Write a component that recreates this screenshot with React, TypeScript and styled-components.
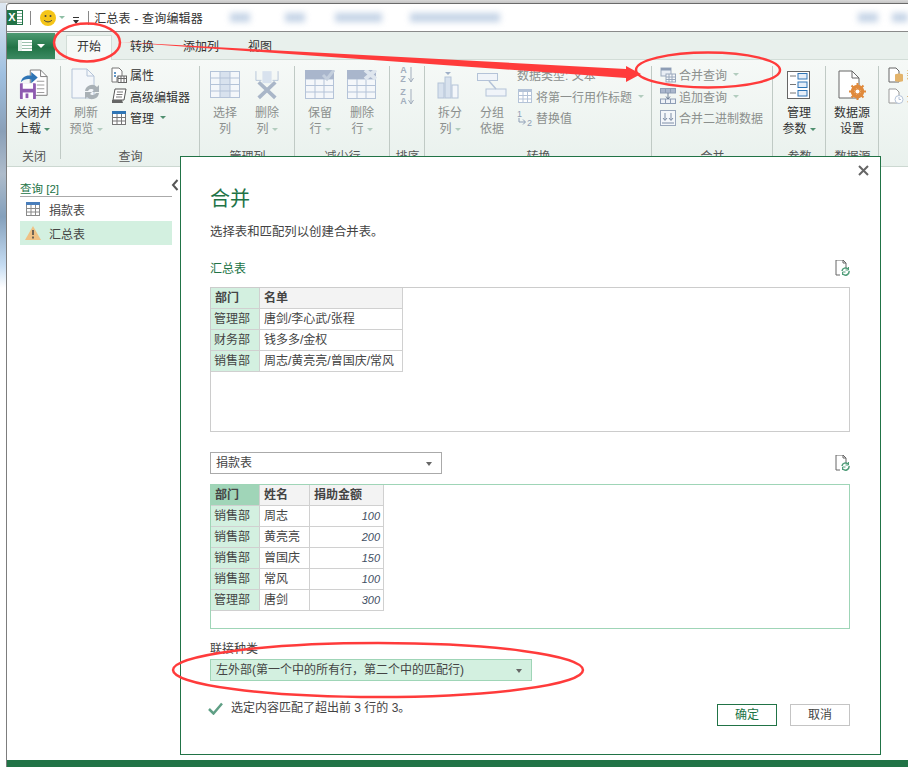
import React from 'react';
import styled, { createGlobalStyle } from 'styled-components';

const GlobalStyle = createGlobalStyle`
  html, body { margin: 0; padding: 0; background: #fff; }
  body { font-family: "Liberation Sans", "Noto Sans CJK SC", sans-serif; font-size: 12px; color: #444; }
  * { box-sizing: border-box; }
`;

const OFF = '#b4c3d8';
const OFF_FILL = '#d8e2ee';

/* ---------- ribbon icons ---------- */
const CloseLoadIcon = () => (
  <svg width="30" height="32" viewBox="0 0 32 34">
    <path d="M12 1h11l7 7v20H12z" fill="#fff" stroke="#777" />
    <path d="M23 1v7h7" fill="none" stroke="#777" />
    <path d="M19 13h8M19 17h8M19 21h8M19 25h8" stroke="#999" />
    <path d="M2 14c1-6 6-8 11-7V3l7 6-7 6v-4c-4-1-8 0-11 3z" fill="#2f75b5" />
    <rect x="1" y="15" width="17" height="17" rx="1" fill="#8e5bb0" />
    <rect x="4" y="15" width="11" height="6" fill="#fff" />
    <rect x="4" y="25" width="11" height="7" fill="#fff" />
    <rect x="7" y="26" width="3" height="5" fill="#8e5bb0" />
  </svg>
);
const RefreshIcon = () => (
  <svg width="32" height="34" viewBox="0 0 32 34">
    <path d="M2 1h15l7 7v22H2z" fill="#f4f7fa" stroke={OFF} />
    <path d="M17 1v7h7" fill="none" stroke={OFF} />
    <path d="M15 23a7 7 0 0 1 12-4l2-2v7h-7l2-2a4 4 0 0 0-6 1z" fill="#a9b1b6" />
    <path d="M29 25a7 7 0 0 1-12 4l-2 2v-7h7l-2 2a4 4 0 0 0 6-1z" fill="#a9b1b6" />
  </svg>
);
const PropsIcon = () => (
  <svg width="16" height="16" viewBox="0 0 16 16">
    <path d="M1 1h7l3 3v6H6v5H1z" fill="#fff" stroke="#777" />
    <path d="M3 6h2M3 9h2" stroke="#2f75b5" strokeWidth="1.5" />
    <rect x="7" y="9" width="8.5" height="6.5" fill="#fff" stroke="#666" />
    <path d="M7 11.5h8M10 9v6M13 9v6" stroke="#666" />
  </svg>
);
const ScrollIcon = () => (
  <svg width="16" height="16" viewBox="0 0 16 16">
    <path d="M4 1h11l-2 11H2z" fill="#fff" stroke="#555" />
    <path d="M1 12h10l1 3H1z" fill="#666" />
    <path d="M6 4h6M5.500 6.500h6M5 9h6" stroke="#777" />
  </svg>
);
const SmallGrid = ({ head = '#2f75b5', line = '#777' }: { head?: string; line?: string }) => (
  <svg width="14" height="14" viewBox="0 0 14 14">
    <rect x=".5" y=".5" width="13" height="13" fill="#fff" stroke={line} />
    <rect x="0" y="0" width="14" height="3" fill={head} />
    <path d="M0 6.500h14M0 10h14M5 3v11M9.500 3v11" stroke={line} />
  </svg>
);
const ChooseIcon = () => (
  <svg width="30" height="27" viewBox="0 0 30 27">
    <rect x=".5" y=".5" width="29" height="26" fill="#f4f7fa" stroke={OFF} />
    <rect x="10" y="1" width="10" height="25" fill={OFF_FILL} />
    <path d="M0 7h30M0 13.500h30M0 20h30M10 0v27M20 0v27" stroke={OFF} />
  </svg>
);
const RemoveColIcon = () => (
  <svg width="24" height="30" viewBox="0 0 26 30">
    <path d="M1 0v10h6M25 0v10h-6" fill="none" stroke={OFF} />
    <rect x="8" y="0" width="10" height="13" fill={OFF_FILL} />
    <path d="M4 12l18 17M22 12L4 29" stroke="#a9b6c8" strokeWidth="4" />
  </svg>
);
const KeepRowIcon = ({ cross }: { cross?: boolean }) => (
  <svg width="30" height="29" viewBox="0 0 30 29">
    <rect x=".5" y="9" width="28" height="19.500" fill="#f4f7fa" stroke={OFF} />
    <path d="M0 15.500h29M0 22h29M10 9v20M19 9v20" stroke={OFF} />
    <rect x="0" y="0" width="29" height="9" fill="#a9b6cc" />
    {cross
      ? <path d="M18 0l11 9M29 0L18 9" stroke="#dfe6ee" strokeWidth="4" />
      : <path d="M18 5l4 4 7-9" fill="none" stroke="#c4cfdd" strokeWidth="3" />}
  </svg>
);
const SortIcon = ({ top, bottom }: { top: string; bottom: string }) => (
  <SortBox>
    <SortLetters><span>{top}</span><span>{bottom}</span></SortLetters>
    <svg width="6" height="16" viewBox="0 0 6 16"><path d="M3 0v15M.5 11L3 15l2.500-4" fill="none" stroke="#a3aebd" /></svg>
  </SortBox>
);
const SplitIcon = () => (
  <svg width="26" height="28" viewBox="0 0 26 28">
    <rect x="1" y="12" width="6" height="15" fill={OFF_FILL} stroke={OFF} />
    <rect x="8" y="6" width="6" height="21" fill={OFF_FILL} stroke={OFF} />
    <rect x="15" y="14" width="6" height="13" fill="#f4f7fa" stroke={OFF} />
    <path d="M8 1h6l-3 3z" fill="#9fb0c8" />
  </svg>
);
const GroupIcon = () => (
  <svg width="30" height="24" viewBox="0 0 30 24">
    <rect x=".5" y=".5" width="20" height="7" fill="#f0f4f9" stroke={OFF} />
    <rect x="9" y="16" width="20" height="7" fill="#f0f4f9" stroke={OFF} />
    <path d="M12 8l7 8" stroke={OFF} strokeWidth="1.500" />
  </svg>
);
const MergeIcon = () => (
  <svg width="16" height="16" viewBox="0 0 16 16">
    <rect x="1" y="1" width="10" height="8" fill="#e9eef5" stroke="#9aa8bc" />
    <rect x="1" y="1" width="10" height="2.500" fill="#8d9db5" />
    <rect x="6" y="7" width="9.500" height="8" fill="#f4f7fa" stroke="#9aa8bc" />
    <path d="M6 10h9M6 12.500h9M9 7v8M12 7v8" stroke="#9aa8bc" />
  </svg>
);
const AppendIcon = () => (
  <svg width="16" height="16" viewBox="0 0 16 16">
    <rect x=".5" y=".5" width="15" height="4.500" fill="#a9b6cc" stroke="#8d9db5" />
    <rect x=".5" y="11" width="15" height="4.500" fill="#eef2f7" stroke="#8d9db5" />
    <path d="M5.500 0v5M10.500 0v5M5.500 11v5M10.500 11v5" stroke="#8d9db5" />
    <path d="M8 5v6M6 8.500L8 11l2-2.500" fill="none" stroke="#6f8098" />
  </svg>
);
const BinaryIcon = () => (
  <svg width="16" height="16" viewBox="0 0 16 16">
    <rect x=".5" y=".5" width="15" height="15" fill="#f4f7fa" stroke="#9aa8bc" />
    <path d="M5 3v7M3 8l2 2.500L7 8M11 3v7M9 8l2 2.500L13 8M2 13h12" fill="none" stroke="#7c8da6" />
  </svg>
);
const ReplaceIcon = () => (
  <svg width="16" height="18" viewBox="0 0 16 18">
    <text x="0" y="8" fontSize="9" fontFamily="Liberation Sans, sans-serif" fill="#8d9db5">1</text>
    <text x="10" y="17" fontSize="9" fontFamily="Liberation Sans, sans-serif" fill="#8d9db5">2</text>
    <path d="M2 9v4h6M6 10.500L8.500 13 6 15.500" fill="none" stroke="#8d9db5" />
  </svg>
);
const ParamsIcon = () => (
  <svg width="24" height="28" viewBox="0 0 24 28">
    <rect x=".5" y=".5" width="22" height="27" fill="#fff" stroke="#666" />
    <path d="M3 5h6M3 13.500h6M3 22h6" stroke="#777" />
    <g fill="#e6eef8" stroke="#2f75b5"><rect x="11" y="2.500" width="9" height="5.500" /><rect x="11" y="11" width="9" height="5.500" /><rect x="11" y="19.500" width="9" height="5.500" /></g>
  </svg>
);
const SourceIcon = () => (
  <svg width="28" height="30" viewBox="0 0 28 30">
    <path d="M1 1h13l7 7v20H1z" fill="#fff" stroke="#666" />
    <path d="M14 1v7h7" fill="none" stroke="#666" />
    <circle cx="19.500" cy="21.500" r="5" fill="none" stroke="#e08a3c" strokeWidth="3.500" />
    <path d="M19.500 13v17M11 21.500h17M13.500 15.500l12 12M25.500 15.500l-12 12" stroke="#e08a3c" strokeWidth="2" />
    <circle cx="19.500" cy="21.500" r="2" fill="#fff" />
  </svg>
);
const DocDbIcon = () => (
  <svg width="16" height="16" viewBox="0 0 16 16">
    <path d="M1 1h7l3 3v11H1z" fill="#fff" stroke="#666" />
    <ellipse cx="11" cy="8" rx="4" ry="1.500" fill="#e3b36a" />
    <path d="M7 8v6c0 1 8 1 8 0V8z" fill="#e3b36a" />
  </svg>
);
const DocClockIcon = () => (
  <svg width="16" height="16" viewBox="0 0 16 16">
    <path d="M1 1h7l3 3v11H1z" fill="#fff" stroke="#999" />
    <circle cx="11" cy="11.500" r="4" fill="#fff" stroke={OFF} />
    <path d="M11 9v2.500h2" fill="none" stroke={OFF} />
  </svg>
);
const DocRefresh = () => (
  <svg width="15" height="16" viewBox="0 1 15 16">
    <path d="M5 16H1V1h7l3 3v5" fill="none" stroke="#666" />
    <path d="M8 1v3h3" fill="none" stroke="#666" />
    <path d="M7 12a3.500 3.500 0 0 1 6-2M14 12a3.500 3.500 0 0 1-6 3" fill="none" stroke="#4f9c78" strokeWidth="1.500" />
    <path d="M13.500 8v3h-3M7.500 16v-3h3" fill="none" stroke="#4f9c78" />
  </svg>
);

/* ---------- page frame ---------- */
const Page = styled.div`
  position: relative;
  width: 908px;
  height: 767px;
  overflow: hidden;
  display: flex;
  flex-direction: column;
  background: #fff;
`;
const TopEdge = styled.div`
  height: 3px;
  flex: none;
  background: linear-gradient(#d8d8d8, #c4c4c4);
`;
const Main = styled.div`
  flex: 1;
  min-height: 0;
  display: flex;
`;
const DesktopStrip = styled.div`
  width: 6px;
  flex: none;
  height: 285px;
  background: linear-gradient(#dfe8f2 0%, #9fc0e0 25%, #8aa0b8 45%, #aebccb 60%, #84a0bc 75%, #c5dcf2 92%, #fff 100%);
`;
const AppWindow = styled.div`
  flex: 1;
  min-width: 0;
  display: flex;
  flex-direction: column;
  border-left: 1px solid #7d7d7d;
  border-top: 1px solid #6a6a6a;
  border-top-left-radius: 4px;
`;

/* ---------- title bar ---------- */
const TitleBar = styled.div`
  height: 28px;
  flex: none;
  display: flex;
  align-items: center;
  border-bottom: 1px solid #8a8a8a;
  color: #333;
  font-size: 12px;
`;
const ExcelMark = styled.div`
  position: relative;
  width: 16px;
  height: 15px;
  flex: none;
  background: repeating-linear-gradient(#fff 0 2px, #7fae96 2px 3px);
  border: 1px solid #217346;
`;
const ExcelX = styled.span`
  position: absolute;
  left: -1px;
  top: -1px;
  width: 10px;
  height: 15px;
  background: #217346;
  color: #fff;
  font: bold 11px/15px "Liberation Sans", sans-serif;
  text-align: center;
`;
const Divider = styled.div<{ $left: number }>`
  width: 1px;
  height: 14px;
  flex: none;
  margin-left: ${p => p.$left}px;
  background: #888;
`;
const Smiley = styled.div`
  position: relative;
  width: 16px;
  height: 16px;
  flex: none;
  margin-left: 9px;
  border-radius: 50%;
  background: #f5c518;
`;
const SmileyCaret = styled.div`
  width: 0;
  height: 0;
  margin: 0 0 0 3px;
  border: 3px solid transparent;
  border-top: 3px solid #8fbfa5;
  transform: translateY(1px);
`;
const QuickCaret = styled.div`
  width: 7px;
  margin-left: 8px;
  margin-top: 6px;
  border-top: 1px solid #333;
  padding-top: 2px;
  &::after {
    content: '';
    display: block;
    width: 0;
    height: 0;
    border: 3.500px solid transparent;
    border-top: 4px solid #333;
    border-bottom: 0;
  }
`;
const WindowTitle = styled.div`
  margin-left: 5px;
  white-space: nowrap;
  letter-spacing: .2px;
`;
const BlurMenu = styled.div<{ $left: number; $w: number }>`
  width: ${p => p.$w}px;
  height: 9px;
  flex: none;
  margin-left: ${p => p.$left}px;
  background: #c4d3e6;
  filter: blur(3px);
`;

/* ---------- tabs ---------- */
const TabStrip = styled.div`
  height: 28px;
  flex: none;
  display: flex;
  align-items: flex-end;
  background: #e8f0ec;
  border-bottom: 1px solid #d2ddd7;
`;
const FileButton = styled.div`
  width: 48px;
  height: 26px;
  align-self: center;
  flex: none;
  display: flex;
  align-items: center;
  justify-content: center;
  gap: 5px;
  background: linear-gradient(#4d9a72, #217346 55%, #3c8a62);
`;
const FileGlyph = styled.div`
  width: 14px;
  height: 11px;
  background: repeating-linear-gradient(#fff 0 2px, #9cc2ae 2px 3px);
  border-left: 4px solid #e4efe9;
`;
const FileCaret = styled.div`
  width: 0;
  height: 0;
  border: 4px solid transparent;
  border-top: 4px solid #fff;
  border-bottom: 0;
`;
const Tab = styled.div<{ $w: number; $left?: number; $active?: boolean }>`
  width: ${p => p.$w}px;
  height: 25px;
  flex: none;
  margin-left: ${p => p.$left ?? 0}px;
  margin-bottom: -1px;
  text-align: center;
  line-height: 22px;
  color: #333;
  background: ${p => (p.$active ? '#f7faf8' : 'transparent')};
  border: 1px solid ${p => (p.$active ? '#d2ddd7' : 'transparent')};
  border-bottom: 0;
`;

/* ---------- ribbon ---------- */
const Ribbon = styled.div`
  height: 107px;
  flex: none;
  display: flex;
  background: linear-gradient(#f6f9f7, #e9f1ed);
  border-bottom: 1px solid #ccd8d1;
`;
const Group = styled.div<{ $w: number; $last?: boolean }>`
  position: relative;
  width: ${p => p.$w}px;
  flex: none;
  display: flex;
  flex-direction: column;
  &::after {
    content: '';
    display: ${p => (p.$last ? 'none' : 'block')};
    position: absolute;
    right: 0;
    top: 6px;
    bottom: 7px;
    width: 1px;
    background: #c0cac5;
  }
`;
const GroupBody = styled.div<{ $pad?: number }>`
  flex: 1;
  display: flex;
  padding: 5px 0 0 ${p => p.$pad ?? 0}px;
`;
const GroupLabel = styled.div`
  height: 16px;
  margin-bottom: 1px;
  line-height: 16px;
  text-align: center;
  color: #555;
`;
const LargeButton = styled.div<{ $w: number; $off?: boolean }>`
  width: ${p => p.$w}px;
  flex: none;
  display: flex;
  flex-direction: column;
  align-items: center;
  color: ${p => (p.$off ? '#8b8f8d' : '#333')};
`;
const IconSlot = styled.div`
  height: 40px;
  padding-bottom: 1px;
  display: flex;
  align-items: center;
  justify-content: center;
`;
const ButtonLine = styled.div`
  height: 16px;
  line-height: 16px;
  white-space: nowrap;
  display: flex;
  align-items: center;
`;
const Caret = styled.i<{ $off?: boolean }>`
  display: inline-block;
  width: 0;
  height: 0;
  margin-left: 3px;
  border: 3px solid transparent;
  border-top: 3px solid ${p => (p.$off ? '#b2ccbe' : '#4f8f6f')};
  border-bottom: 0;
`;
const SmallColumn = styled.div<{ $left?: number }>`
  display: flex;
  flex-direction: column;
  margin-top: -1px;
  margin-left: ${p => p.$left ?? 0}px;
`;
const SmallRow = styled.div<{ $off?: boolean }>`
  height: 21.500px;
  display: flex;
  align-items: center;
  gap: 3px;
  white-space: nowrap;
  color: ${p => (p.$off ? '#8b8f8d' : '#333')};
`;
const SmallIcon = styled.div`
  width: 16px;
  height: 16px;
  flex: none;
  display: flex;
  align-items: center;
  justify-content: center;
`;
const SortColumn = styled.div`
  display: flex;
  flex-direction: column;
  align-items: center;
  gap: 4px;
  width: 34px;
  padding-top: 1px;
`;
const SortBox = styled.div`
  display: flex;
  align-items: center;
  gap: 1px;
  height: 18px;
`;
const SortLetters = styled.div`
  display: flex;
  flex-direction: column;
  font: bold 9px/9px "Liberation Sans", sans-serif;
  color: #a3aebd;
`;

/* ---------- query pane ---------- */
const Content = styled.div`
  flex: 1;
  min-height: 0;
`;
const QueryPane = styled.div`
  width: 166px;
  margin-left: 13px;
  padding-top: 14px;
`;
const PaneHeader = styled.div`
  position: relative;
  width: 152px;
  height: 16px;
  line-height: 17px;
  color: #217346;
  font-size: 11.500px;
  border-bottom: 1px solid #aaa;
`;
const PaneCollapse = styled.svg`
  position: absolute;
  right: -7px;
  top: -2px;
`;
const QueryRow = styled.div<{ $selected?: boolean }>`
  width: 152px;
  height: 24px;
  display: flex;
  align-items: center;
  gap: ${p => (p.$selected ? 8 : 9)}px;
  padding-left: ${p => (p.$selected ? 5 : 6)}px;
  color: #444;
  background: ${p => (p.$selected ? '#d3f0e0' : 'transparent')};
`;

/* ---------- dialog ---------- */
const Dialog = styled.div`
  position: absolute;
  left: 180px;
  top: 156px;
  width: 701px;
  height: 599px;
  padding: 28px 30px 0 29px;
  display: flex;
  flex-direction: column;
  background: #fff;
  border: 1px solid #217346;
`;
const CloseButton = styled.svg`
  position: absolute;
  right: 11px;
  top: 8px;
`;
const DialogTitle = styled.div`
  height: 28px;
  line-height: 28px;
  font-size: 20px;
  color: #217346;
`;
const DialogIntro = styled.div`
  height: 16px;
  margin-top: 11px;
  line-height: 16px;
  font-size: 12.400px;
  color: #444;
`;
const SectionRow = styled.div<{ $top: number; $h: number }>`
  height: ${p => p.$h}px;
  display: flex;
  align-items: center;
  justify-content: space-between;
  margin-top: ${p => p.$top}px;
`;
const SectionName = styled.div`
  line-height: 18px;
  height: 16px;
  color: #217346;
`;
const PreviewBox = styled.div<{ $top: number; $active?: boolean }>`
  height: 145px;
  margin-top: ${p => p.$top}px;
  border: 1px solid ${p => (p.$active ? '#9fd5b7' : '#ccc')};
`;
const Table = styled.table`
  border-collapse: separate;
  border-spacing: 0;
  table-layout: fixed;
  font-size: 12px;
  line-height: 16px;
  color: #444;
`;
const HeadCell = styled.th<{ $w: number; $key?: boolean; $selected?: boolean }>`
  width: ${p => p.$w}px;
  height: 21px;
  padding: 0 4px;
  text-align: left;
  font-weight: 700;
  color: #444;
  background: ${p => (p.$selected ? '#a0d5b8' : p.$key ? '#d3f0e0' : '#f3f3f3')};
  border-right: 1px solid #d0d0d0;
  border-bottom: 1px solid #d0d0d0;
`;
const Cell = styled.td<{ $key?: boolean; $num?: boolean }>`
  height: 21px;
  padding: 0 ${p => (p.$num || p.$key ? 3 : 4)}px;
  white-space: nowrap;
  text-align: ${p => (p.$num ? 'right' : 'left')};
  font-style: ${p => (p.$num ? 'italic' : 'normal')};
  font-size: ${p => (p.$num ? 11 : 12)}px;
  color: ${p => (p.$num ? '#3f4f63' : '#444')};
  background: ${p => (p.$key ? '#d3f0e0' : '#fff')};
  border-right: 1px solid #d0d0d0;
  border-bottom: 1px solid #d0d0d0;
`;
const Select = styled.div<{ $w: number; $top?: number; $green?: boolean }>`
  width: ${p => p.$w}px;
  height: 22px;
  margin-top: ${p => p.$top ?? 0}px;
  padding: 1px 9px 0 5px;
  display: flex;
  align-items: center;
  justify-content: space-between;
  line-height: 17px;
  color: #444;
  background: ${p => (p.$green ? '#d3f0e0' : '#fff')};
  border: 1px solid ${p => (p.$green ? '#9fd5b7' : '#aaa')};
`;
const SelectCaret = styled.i`
  width: 0;
  height: 0;
  border: 3.500px solid transparent;
  border-top: 4px solid #666;
  border-bottom: 0;
`;
const JoinLabel = styled.div`
  height: 16px;
  margin-top: 11px;
  line-height: 18px;
  color: #444;
`;
const Footer = styled.div`
  height: 26px;
  margin-top: 19px;
  display: flex;
  justify-content: space-between;
`;
const MatchNote = styled.div`
  height: 16px;
  display: flex;
  align-items: center;
  gap: 8px;
  margin-left: -2px;
  padding-top: 1px;
  line-height: 17px;
  color: #444;
  font-size: 12px;
`;
const FooterButtons = styled.div`
  align-self: flex-end;
  display: flex;
  gap: 13px;
`;
const DialogButton = styled.div<{ $primary?: boolean }>`
  width: 60px;
  height: 22px;
  line-height: 20px;
  text-align: center;
  color: ${p => (p.$primary ? '#217346' : '#444')};
  border: 1px solid ${p => (p.$primary ? '#217346' : '#c4c4c4')};
`;
const StatusBar = styled.div`
  height: 7px;
  flex: none;
  background: #217346;
`;
const Markup = styled.svg`
  position: absolute;
  inset: 0;
  pointer-events: none;
`;

/* ---------- data ---------- */
const summaryRows = [
  ['管理部', '唐剑/李心武/张程'],
  ['财务部', '钱多多/金权'],
  ['销售部', '周志/黄亮亮/曾国庆/常风'],
];
const donationRows = [
  ['销售部', '周志', '100'],
  ['销售部', '黄亮亮', '200'],
  ['销售部', '曾国庆', '150'],
  ['销售部', '常风', '100'],
  ['管理部', '唐剑', '300'],
];

const App: React.FC = () => (
  <Page>
    <GlobalStyle />
    <TopEdge />
    <Main>
      <DesktopStrip />
      <AppWindow>
        <TitleBar>
          <ExcelMark><ExcelX>X</ExcelX></ExcelMark>
          <Divider $left={7} />
          <Smiley>
            <svg width="16" height="16" viewBox="0 0 16 16">
              <circle cx="5.500" cy="6" r="1" fill="#444" />
              <circle cx="10.500" cy="6" r="1" fill="#444" />
              <path d="M4 10c2 2.500 6 2.500 8 0" fill="none" stroke="#444" />
            </svg>
          </Smiley>
          <SmileyCaret />
          <QuickCaret />
          <Divider $left={9} />
          <WindowTitle>汇总表 - 查询编辑器</WindowTitle>
          <BlurMenu $left={27} $w={20} />
          <BlurMenu $left={35} $w={20} />
          <BlurMenu $left={30} $w={47} />
          <BlurMenu $left={28} $w={90} />
          <BlurMenu $left={358} $w={20} />
          <BlurMenu $left={14} $w={16} />
        </TitleBar>
        <TabStrip>
          <FileButton><FileGlyph /><FileCaret /></FileButton>
          <Tab $w={46} $left={11} $active>开始</Tab>
          <Tab $w={60}>转换</Tab>
          <Tab $w={58}>添加列</Tab>
          <Tab $w={60}>视图</Tab>
        </TabStrip>
        <Ribbon>
          <Group $w={54}>
            <GroupBody>
              <LargeButton $w={53}>
                <IconSlot><CloseLoadIcon /></IconSlot>
                <ButtonLine>关闭并</ButtonLine>
                <ButtonLine>上载<Caret /></ButtonLine>
              </LargeButton>
            </GroupBody>
            <GroupLabel>关闭</GroupLabel>
          </Group>
          <Group $w={139}>
            <GroupBody>
              <LargeButton $w={50} $off>
                <IconSlot><RefreshIcon /></IconSlot>
                <ButtonLine>刷新</ButtonLine>
                <ButtonLine>预览<Caret $off /></ButtonLine>
              </LargeButton>
              <SmallColumn>
                <SmallRow><SmallIcon><PropsIcon /></SmallIcon>属性</SmallRow>
                <SmallRow><SmallIcon><ScrollIcon /></SmallIcon>高级编辑器</SmallRow>
                <SmallRow><SmallIcon><SmallGrid /></SmallIcon>管理<Caret /></SmallRow>
              </SmallColumn>
            </GroupBody>
            <GroupLabel>查询</GroupLabel>
          </Group>
          <Group $w={95}>
            <GroupBody>
              <LargeButton $w={50} $off>
                <IconSlot><ChooseIcon /></IconSlot>
                <ButtonLine>选择</ButtonLine>
                <ButtonLine>列</ButtonLine>
              </LargeButton>
              <LargeButton $w={34} $off>
                <IconSlot><RemoveColIcon /></IconSlot>
                <ButtonLine>删除</ButtonLine>
                <ButtonLine>列<Caret $off /></ButtonLine>
              </LargeButton>
            </GroupBody>
            <GroupLabel>管理列</GroupLabel>
          </Group>
          <Group $w={95}>
            <GroupBody>
              <LargeButton $w={50} $off>
                <IconSlot><KeepRowIcon /></IconSlot>
                <ButtonLine>保留</ButtonLine>
                <ButtonLine>行<Caret $off /></ButtonLine>
              </LargeButton>
              <LargeButton $w={34} $off>
                <IconSlot><KeepRowIcon cross /></IconSlot>
                <ButtonLine>删除</ButtonLine>
                <ButtonLine>行<Caret $off /></ButtonLine>
              </LargeButton>
            </GroupBody>
            <GroupLabel>减少行</GroupLabel>
          </Group>
          <Group $w={35}>
            <GroupBody>
              <SortColumn>
                <SortIcon top="A" bottom="Z" />
                <SortIcon top="Z" bottom="A" />
              </SortColumn>
            </GroupBody>
            <GroupLabel>排序</GroupLabel>
          </Group>
          <Group $w={227}>
            <GroupBody>
              <LargeButton $w={50} $off>
                <IconSlot><SplitIcon /></IconSlot>
                <ButtonLine>拆分</ButtonLine>
                <ButtonLine>列<Caret $off /></ButtonLine>
              </LargeButton>
              <LargeButton $w={34} $off>
                <IconSlot><GroupIcon /></IconSlot>
                <ButtonLine>分组</ButtonLine>
                <ButtonLine>依据</ButtonLine>
              </LargeButton>
              <SmallColumn $left={8}>
                <SmallRow $off>数据类型: 文本</SmallRow>
                <SmallRow $off><SmallIcon><SmallGrid head={OFF} line={OFF} /></SmallIcon>将第一行用作标题<Caret $off /></SmallRow>
                <SmallRow $off><SmallIcon><ReplaceIcon /></SmallIcon>替换值</SmallRow>
              </SmallColumn>
            </GroupBody>
            <GroupLabel>转换</GroupLabel>
          </Group>
          <Group $w={121}>
            <GroupBody $pad={8}>
              <SmallColumn>
                <SmallRow $off><SmallIcon><MergeIcon /></SmallIcon>合并查询<Caret $off /></SmallRow>
                <SmallRow $off><SmallIcon><AppendIcon /></SmallIcon>追加查询<Caret $off /></SmallRow>
                <SmallRow $off><SmallIcon><BinaryIcon /></SmallIcon>合并二进制数据</SmallRow>
              </SmallColumn>
            </GroupBody>
            <GroupLabel>合并</GroupLabel>
          </Group>
          <Group $w={53}>
            <GroupBody>
              <LargeButton $w={52}>
                <IconSlot><ParamsIcon /></IconSlot>
                <ButtonLine>管理</ButtonLine>
                <ButtonLine>参数<Caret /></ButtonLine>
              </LargeButton>
            </GroupBody>
            <GroupLabel>参数</GroupLabel>
          </Group>
          <Group $w={53}>
            <GroupBody>
              <LargeButton $w={52}>
                <IconSlot><SourceIcon /></IconSlot>
                <ButtonLine>数据源</ButtonLine>
                <ButtonLine>设置</ButtonLine>
              </LargeButton>
            </GroupBody>
            <GroupLabel>数据源</GroupLabel>
          </Group>
          <Group $w={29} $last>
            <GroupBody $pad={9}>
              <SmallColumn>
                <SmallRow><SmallIcon><DocDbIcon /></SmallIcon>新</SmallRow>
                <SmallRow><SmallIcon><DocClockIcon /></SmallIcon>最</SmallRow>
              </SmallColumn>
            </GroupBody>
          </Group>
        </Ribbon>
        <Content>
          <QueryPane>
            <PaneHeader>
              查询 [2]
              <PaneCollapse width="8" height="12" viewBox="0 0 8 12">
                <path d="M6.500 1L2 6l4.500 5" fill="none" stroke="#555" strokeWidth="2" />
              </PaneCollapse>
            </PaneHeader>
            <QueryRow><SmallGrid head="#4a7ebb" line="#8a8a8a" />捐款表</QueryRow>
            <QueryRow $selected>
              <svg width="16" height="14" viewBox="0 0 16 14">
                <path d="M8 0l8 14H0z" fill="#efc184" />
                <path d="M8 4v5M8 10.500v2" stroke="#444" strokeWidth="1.500" />
              </svg>
              汇总表
            </QueryRow>
          </QueryPane>
        </Content>
        <StatusBar />
      </AppWindow>
    </Main>

    <Dialog>
      <CloseButton width="11" height="11" viewBox="0 0 11 11">
        <path d="M1 1l9 9M10 1l-9 9" stroke="#666" strokeWidth="2" />
      </CloseButton>
      <DialogTitle>合并</DialogTitle>
      <DialogIntro>选择表和匹配列以创建合并表。</DialogIntro>
      <SectionRow $top={20} $h={16}>
        <SectionName>汇总表</SectionName>
        <DocRefresh />
      </SectionRow>
      <PreviewBox $top={11}>
        <Table>
          <thead>
            <tr><HeadCell $w={49} $key>部门</HeadCell><HeadCell $w={143}>名单</HeadCell></tr>
          </thead>
          <tbody>
            {summaryRows.map(r => (
              <tr key={r[0]}><Cell $key>{r[0]}</Cell><Cell>{r[1]}</Cell></tr>
            ))}
          </tbody>
        </Table>
      </PreviewBox>
      <SectionRow $top={20} $h={22}>
        <Select $w={232}>捐款表<SelectCaret /></Select>
        <DocRefresh />
      </SectionRow>
      <PreviewBox $top={10} $active>
        <Table>
          <thead>
            <tr><HeadCell $w={49} $selected>部门</HeadCell><HeadCell $w={50}>姓名</HeadCell><HeadCell $w={74}>捐助金额</HeadCell></tr>
          </thead>
          <tbody>
            {donationRows.map(r => (
              <tr key={r[1]}><Cell $key>{r[0]}</Cell><Cell>{r[1]}</Cell><Cell $num>{r[2]}</Cell></tr>
            ))}
          </tbody>
        </Table>
      </PreviewBox>
      <JoinLabel>联接种类</JoinLabel>
      <Select $w={322} $top={3} $green>左外部(第一个中的所有行，第二个中的匹配行)<SelectCaret /></Select>
      <Footer>
        <MatchNote>
          <svg width="15" height="13" viewBox="0 0 15 13">
            <path d="M1 7l4.500 4.500L14 1.500" fill="none" stroke="#5f9f85" strokeWidth="2.500" />
          </svg>
          选定内容匹配了超出前 3 行的 3。
        </MatchNote>
        <FooterButtons>
          <DialogButton $primary>确定</DialogButton>
          <DialogButton>取消</DialogButton>
        </FooterButtons>
      </Footer>
    </Dialog>

    <Markup width="908" height="767" viewBox="0 0 908 767">
      <ellipse cx="87" cy="42.500" rx="33" ry="19" fill="none" stroke="#ff3b3b" strokeWidth="2.500" />
      <ellipse cx="708" cy="70" rx="72" ry="17.500" fill="none" stroke="#ff3b3b" strokeWidth="2.500" />
      <ellipse cx="378" cy="670" rx="205" ry="27" fill="none" stroke="#ff3b3b" strokeWidth="2.500" />
      <polygon points="120,42 626,69 626,66 641,74 626,82 626,78" fill="#ff3b3b" />
    </Markup>
  </Page>
);

export default App;
